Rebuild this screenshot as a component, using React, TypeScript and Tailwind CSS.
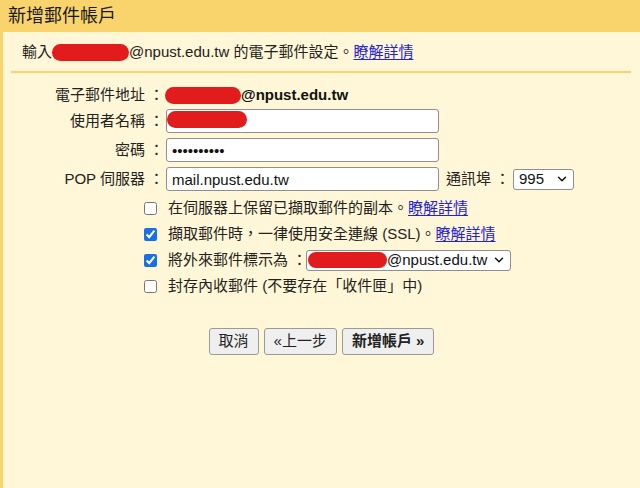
import React from 'react';
import { ChevronDown } from 'lucide-react';

// redaction strokes drawn over private parts of the address
const Blob = ({ className }: { className: string }) => (
  <span className={`block shrink-0 rounded-full bg-[#e21c1c] ${className}`} />
);

// full-width colon sits centred in the reference font
const Colon = () => <span className="ml-[4px] -mr-[1px]">：</span>;

const CheckRow = ({ checked, children }: { checked?: boolean; children: React.ReactNode }) => (
  <label className="flex h-[26px] items-center">
    <input
      type="checkbox"
      defaultChecked={checked}
      className="m-0 h-[13px] w-[13px] shrink-0 accent-[#1a6ee8]"
    />
    <span className="ml-[11px] flex items-center whitespace-nowrap">{children}</span>
  </label>
);

const Link = () => <a className="text-[#2222d6] underline underline-offset-2">瞭解詳情</a>;

const Label = ({ children }: { children: React.ReactNode }) => (
  <span className="w-[160px] shrink-0 whitespace-nowrap text-right">
    {children}
    <Colon />
  </span>
);

const inputCls =
  'h-[24px] w-[273px] shrink-0 rounded-[3px] border border-[#8f8f8f] bg-white px-[5px] text-[15px] text-[#111] outline-none';

const buttonCls =
  'h-[27px] rounded-[3px] border border-[#9a9a9a] bg-[#efefef] px-[9px] text-[15px] text-[#222]';

const App: React.FC = () => {
  return (
    <div
      lang="zh-Hant-TW"
      className="flex h-[488px] w-[640px] flex-col overflow-hidden font-['Liberation_Sans','Noto_Sans_CJK_TC',sans-serif] text-[15px] text-[#222]"
    >
      <header className="flex h-8 shrink-0 items-center bg-[#f9d36b] pl-2 text-[18px] text-[#1a1a1a]">
        新增郵件帳戶
      </header>

      <main className="flex flex-grow flex-col border-l-[3px] border-[#f9d36b] bg-[#fff7d7]">
        <p className="mt-[10px] flex h-[20px] items-center whitespace-nowrap pl-[19px]">
          輸入
          <Blob className="h-[17px] w-[77px]" />
          @npust.edu.tw 的電子郵件設定。
          <Link />
        </p>
        <div className="ml-[8px] mr-[9px] mt-[9px] h-[2px] bg-[#f9d36b]" />

        <div className="flex flex-col pt-[10px]">
          <div className="flex h-[24px] items-center">
            <Label>電子郵件地址</Label>
            <Blob className="ml-[2px] h-[17px] w-[76px]" />
            <span className="font-bold text-[#111]">@npust.edu.tw</span>
          </div>

          <div className="mt-[2px] flex h-[24px] items-center">
            <Label>使用者名稱</Label>
            <div className="relative ml-[3px]">
              <input readOnly className={inputCls} defaultValue="" />
              <Blob className="absolute left-[1px] top-[2px] h-[17px] w-[80px]" />
            </div>
          </div>

          <div className="mt-[5px] flex h-[24px] items-center">
            <Label>密碼</Label>
            <input readOnly className={`ml-[3px] ${inputCls}`} defaultValue="••••••••••" />
          </div>

          <div className="mt-[5px] flex h-[24px] items-center">
            <Label>POP 伺服器</Label>
            <input readOnly className={`ml-[3px] ${inputCls}`} defaultValue="mail.npust.edu.tw" />
            <span className="ml-[7px] shrink-0 whitespace-nowrap">
              通訊埠
              <Colon />
            </span>
            <div className="ml-[4px] flex h-[21px] w-[61px] shrink-0 items-center justify-between rounded-[3px] border border-[#8f8f8f] bg-white pl-[5px] pr-[4px] text-[#111]">
              995
              <ChevronDown size={14} strokeWidth={2.5} />
            </div>
          </div>
        </div>

        <div className="mt-[4px] flex flex-col pl-[141px]">
          <CheckRow>
            在伺服器上保留已擷取郵件的副本。
            <Link />
          </CheckRow>
          <CheckRow checked>
            擷取郵件時，一律使用安全連線 (SSL)。
            <Link />
          </CheckRow>
          <CheckRow checked>
            將外來郵件標示為
            <Colon />
            <span className="flex h-[21px] w-[205px] shrink-0 items-center rounded-[3px] border border-[#8f8f8f] bg-white pr-[4px] text-[#111]">
              <Blob className="ml-[1px] h-[16px] w-[79px]" />
              @npust.edu.tw
              <ChevronDown size={14} strokeWidth={2.5} className="ml-auto" />
            </span>
          </CheckRow>
          <CheckRow>封存內收郵件 (不要存在「收件匣」中)</CheckRow>
        </div>

        <div className="mt-[29px] flex justify-center gap-[5px]">
          <button className={buttonCls}>取消</button>
          <button className={buttonCls}>«上一步</button>
          <button className={`${buttonCls} font-bold`}>新增帳戶 »</button>
        </div>
      </main>
    </div>
  );
};

export default App;
